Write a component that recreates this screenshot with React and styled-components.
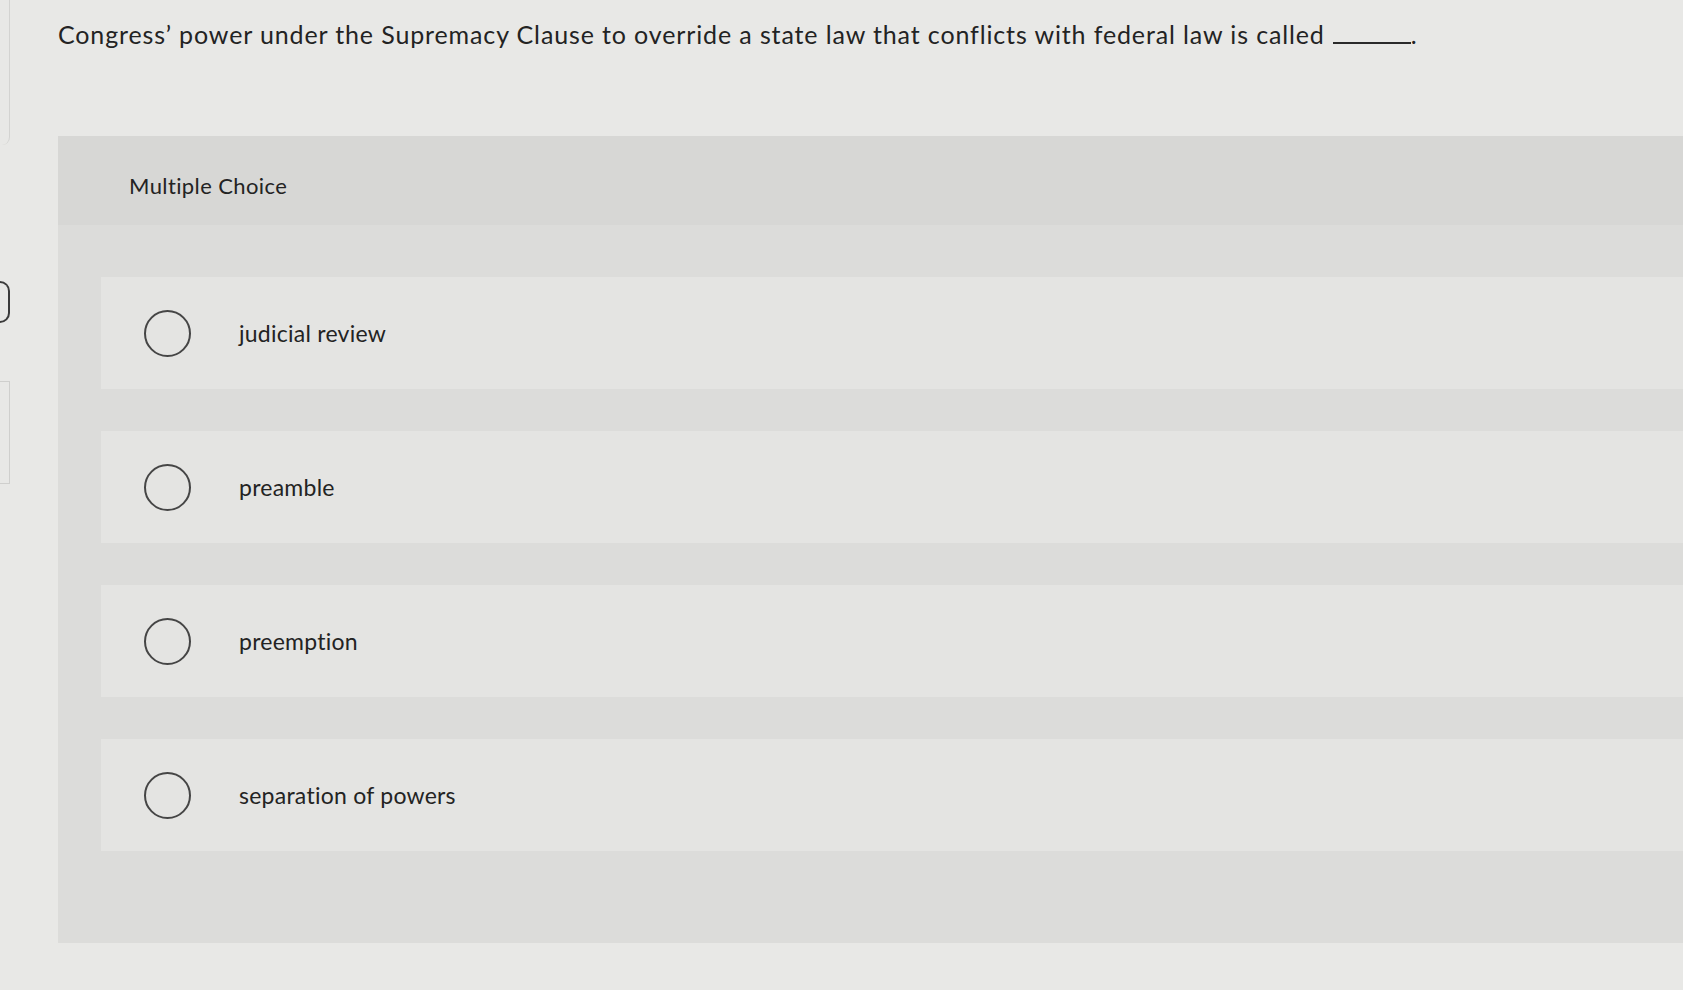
import React from 'react'
import styled, { createGlobalStyle } from 'styled-components'

const GlobalStyle = createGlobalStyle`
  html, body {
    margin: 0;
    padding: 0;
    background: #e8e8e6;
  }
  body {
    font-family: Lato, "Liberation Sans", Arial, sans-serif;
    color: #232323;
  }
`;

const Page = styled.div`
  width: 1683px;
  height: 990px;
  display: flex;
  overflow: hidden;
  background: #e8e8e6;
`;

const Rail = styled.div`
  width: 10px;
  flex-shrink: 0;
  display: flex;
  flex-direction: column;
`;

const RailTop = styled.div`
  width: 10px;
  height: 145px;
  box-sizing: border-box;
  border-right: 1px solid #d3d3d1;
  border-bottom-right-radius: 8px;
`;

const RailKnob = styled.div`
  width: 10px;
  height: 42px;
  margin-top: 136px;
  box-sizing: border-box;
  border: 2px solid #3a3a3a;
  border-left: none;
  border-radius: 0 14px 14px 0;
`;

const RailBox = styled.div`
  width: 10px;
  height: 103px;
  margin-top: 58px;
  box-sizing: border-box;
  border: 1px solid #cfcfcd;
  border-left: none;
`;

const Main = styled.div`
  flex: 1;
  padding: 18px 0 0 48px;
`;

const Question = styled.p`
  margin: 0;
  font-size: 25px;
  line-height: 32px;
  letter-spacing: 0.87px;
`;

const Blank = styled.span`
  display: inline-block;
  width: 78px;
  margin-left: 8px;
  border-bottom: 2px solid #2a2a2a;
`;

const Panel = styled.section`
  margin-top: 86px;
  background: #dcdcda;
  padding-bottom: 92px;
`;

const PanelHeader = styled.div`
  height: 89px;
  box-sizing: border-box;
  display: flex;
  align-items: center;
  padding: 10px 0 0 71px;
  background: #d7d7d5;
  font-size: 22px;
  letter-spacing: 0.4px;
`;

const Options = styled.div`
  display: flex;
  flex-direction: column;
  gap: 42px;
  padding: 52px 0 0 43px;
`;

const Option = styled.label`
  height: 112px;
  display: flex;
  align-items: center;
  padding-left: 43px;
  background: #e4e4e2;
  cursor: pointer;
`;

const Radio = styled.span`
  width: 47px;
  height: 47px;
  box-sizing: border-box;
  border: 2px solid #454545;
  border-radius: 50%;
  flex-shrink: 0;
`;

const OptionText = styled.span`
  margin-left: 48px;
  font-size: 23px;
  letter-spacing: 0.25px;
`;

const choices = ['judicial review', 'preamble', 'preemption', 'separation of powers'];

const App = () => {
  return (
    <>
      <GlobalStyle />
      <Page>
        <Rail>
          <RailTop />
          <RailKnob />
          <RailBox />
        </Rail>
        <Main>
          <Question>
            Congress’ power under the Supremacy Clause to override a state law that conflicts with federal law is called
            <Blank />.
          </Question>
          <Panel>
            <PanelHeader>Multiple Choice</PanelHeader>
            <Options>
              {choices.map((c) => (
                <Option key={c}>
                  <Radio />
                  <OptionText>{c}</OptionText>
                </Option>
              ))}
            </Options>
          </Panel>
        </Main>
      </Page>
    </>
  )
}

export default App
